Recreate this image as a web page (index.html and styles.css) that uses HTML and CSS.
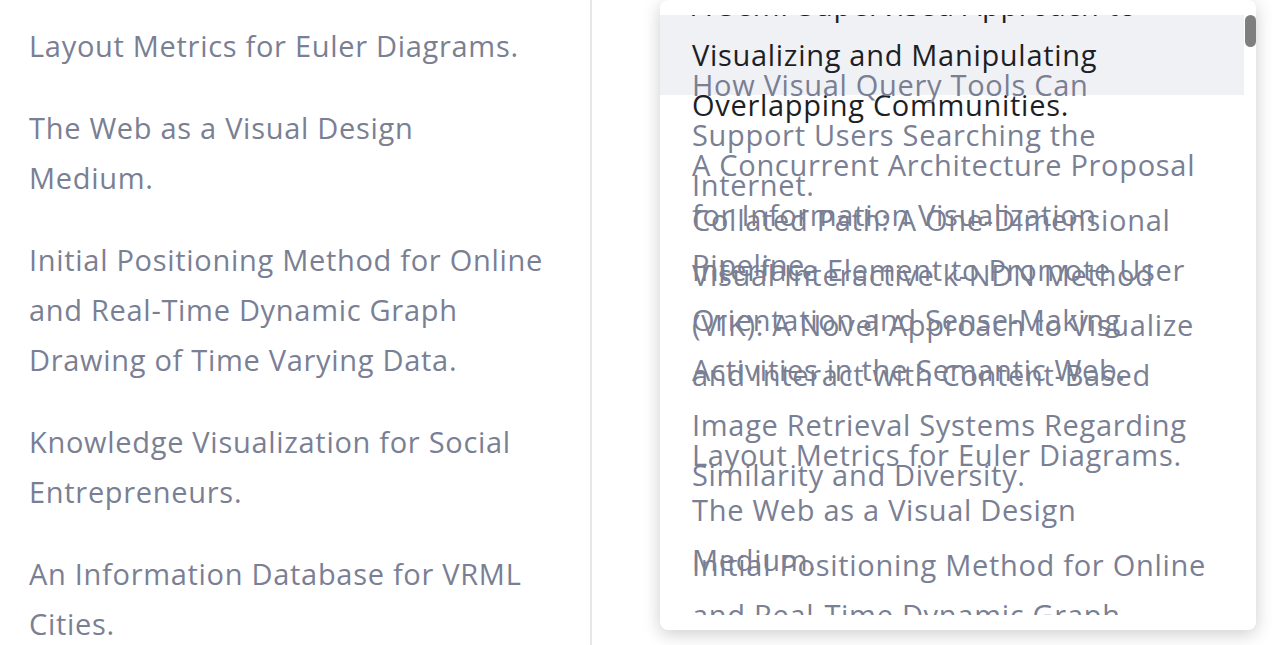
FILE: index.html
```html
<!DOCTYPE html>
<html lang="en">
<head>
<meta charset="utf-8">
<title>Papers</title>
<link rel="stylesheet" href="styles.css">
</head>
<body>
<div class="page">
  <div class="list">
    <p class="title">Layout Metrics for Euler Diagrams.</p>
    <p class="title">The Web as a Visual Design<br>Medium.</p>
    <p class="title">Initial Positioning Method for Online<br>and Real-Time Dynamic Graph<br>Drawing of Time Varying Data.</p>
    <p class="title">Knowledge Visualization for Social<br>Entrepreneurs.</p>
    <p class="title">An Information Database for VRML<br>Cities.</p>
  </div>
  <div class="main"></div>
</div>

<div class="popover">
  <div class="scroller">
    <div class="item active"><span>A Semi-Supervised Approach to<br>Visualizing and Manipulating<br>Overlapping Communities.</span></div>
    <div class="item"><span>How Visual Query Tools Can<br>Support Users Searching the<br>Internet.</span></div>
    <div class="item"><span>A Concurrent Architecture Proposal<br>for Information Visualization<br>Pipeline.</span></div>
    <div class="item"><span>Collated Path: A One-Dimensional<br>Interface Element to Promote User<br>Orientation and Sense-Making<br>Activities in the Semantic Web.</span></div>
    <div class="item"><span>Visual Interactive k-NDN Method<br>(VIK): A Novel Approach to Visualize<br>and Interact with Content-Based<br>Image Retrieval Systems Regarding<br>Similarity and Diversity.</span></div>
    <div class="item"><span>Layout Metrics for Euler Diagrams.</span></div>
    <div class="item"><span>The Web as a Visual Design<br>Medium.</span></div>
    <div class="item"><span>Initial Positioning Method for Online<br>and Real-Time Dynamic Graph<br>Drawing of Time Varying Data.</span></div>
    <div class="item"><span>Knowledge Visualization for Social<br>Entrepreneurs.</span></div>
  </div>
  <div class="thumb"></div>
</div>
</body>
</html>
```
FILE: styles.css
```css
html, body {
  margin: 0;
  padding: 0;
  height: 100%;
  overflow: hidden;
  background: #ffffff;
}

body {
  font-family: "Open Sans", Roboto, "Liberation Sans", sans-serif;
  font-size: 29px;
  line-height: 50px;
  letter-spacing: 0.7px;
  color: #7a7f94;
}

.page {
  display: flex;
  height: 645px;
}

.list {
  width: 561px;
  padding: 21px 0 0 29px;
  border-right: 2px solid #e7e7e9;
  white-space: nowrap;
  overflow: hidden;
}

.title {
  margin: 0 0 32px 0;
}

.main {
  flex: 1;
}

.popover {
  position: absolute;
  left: 660px;
  top: 0;
  width: 596px;
  height: 600px;
  padding: 15px 0;
  background: #ffffff;
  border-radius: 8px;
  box-shadow: 0 4px 18px rgba(0, 0, 0, 0.2);
}

.scroller {
  height: 600px;
  width: 584px;
  overflow: hidden;
}

.item {
  height: 80px;
  display: flex;
  align-items: center;
  padding: 0 32px;
  white-space: nowrap;
  color: #7a7f94;
}

.item span {
  display: block;
  margin-top: -1px;
}

.item.active {
  background: #f0f1f5;
  color: #1e1f26;
}

.thumb {
  position: absolute;
  right: 0;
  top: 15px;
  width: 11px;
  height: 32px;
  border-radius: 6px;
  background: #7f7f7f;
}
```
